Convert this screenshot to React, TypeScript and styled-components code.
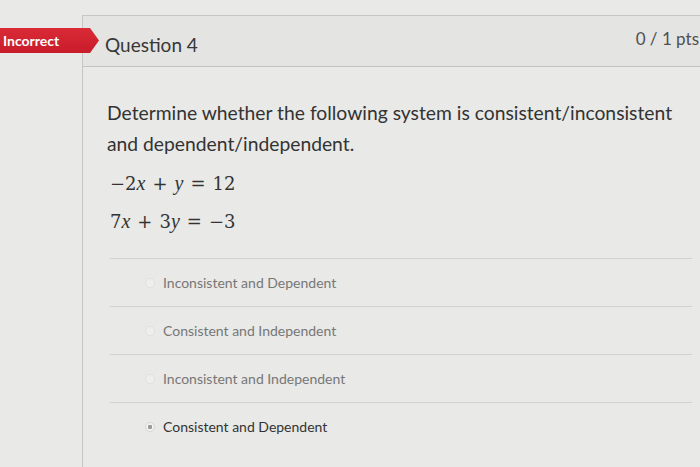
import styled, { createGlobalStyle } from 'styled-components';

const GlobalStyle = createGlobalStyle`
  html, body {
    margin: 0;
    padding: 0;
    background: #e9e9e7;
    font-family: Lato, "Noto Sans", sans-serif;
    overflow: hidden;
  }
`;

interface Answer {
  text: string;
  selected?: boolean;
}

const answers: Answer[] = [
  { text: 'Inconsistent and Dependent' },
  { text: 'Consistent and Independent' },
  { text: 'Inconsistent and Independent' },
  { text: 'Consistent and Dependent', selected: true },
];

const App = () => {
  return (
    <>
      <GlobalStyle />
      <Page>
        <Badge>Incorrect</Badge>
        <Card>
          <Header>
            <Title>Question 4</Title>
            <Points>0 / 1 pts</Points>
          </Header>
          <Body>
            <Prompt>
              Determine whether the following system is consistent/inconsistent and
              dependent/independent.
            </Prompt>
            <Equation>
              −2<Var>x</Var>
              <Op>+</Op>
              <Var>y</Var>
              <Op>=</Op>12
            </Equation>
            <Equation>
              7<Var>x</Var>
              <Op>+</Op>3<Var>y</Var>
              <Op>=</Op>−3
            </Equation>
            <Answers>
              {answers.map((a) => (
                <AnswerRow key={a.text}>
                  <Radio selected={a.selected} />
                  <AnswerText selected={a.selected}>{a.text}</AnswerText>
                </AnswerRow>
              ))}
            </Answers>
          </Body>
        </Card>
      </Page>
    </>
  );
};

export default App;

const Page = styled.div`
  position: relative;
  width: 700px;
  height: 467px;
  padding: 15px 0 0 82px;
  box-sizing: border-box;
  overflow: hidden;
`;

const Badge = styled.div`
  position: absolute;
  left: 0;
  top: 28px;
  height: 25px;
  width: 99px;
  box-sizing: border-box;
  padding-left: 3px;
  background: linear-gradient(#d92a36, #c81c2b);
  clip-path: polygon(0 0, 90px 0, 99px 50%, 90px 100%, 0 100%);
  color: #fff;
  font-size: 14px;
  font-weight: 700;
  line-height: 25px;
`;

const Card = styled.div`
  flex: none;
  width: 640px;
  height: 460px;
  border-top: 1px solid #c6c6c4;
  border-left: 1px solid #c6c6c4;
`;

const Header = styled.div`
  display: flex;
  justify-content: space-between;
  align-items: flex-start;
  height: 51px;
  box-sizing: border-box;
  padding: 0 24px 0 22px;
  background: #e4e4e2;
  border-bottom: 1px solid #c2c2c0;
`;

const Title = styled.h2`
  margin: 17px 0 0;
  font-size: 19px;
  font-weight: 400;
  color: #373737;
`;

const Points = styled.div`
  margin-top: 12px;
  font-size: 17px;
  font-weight: 400;
  color: #505050;
  white-space: nowrap;
`;

const Body = styled.div`
  padding: 30px 0 0 24px;
`;

const Prompt = styled.p`
  margin: 0 0 5px;
  width: 580px;
  font-size: 19.3px;
  line-height: 31px;
  color: #333;
`;

const Equation = styled.div`
  font-family: "DejaVu Serif", "Liberation Serif", serif;
  font-size: 18px;
  color: #333;
  height: 38px;
  line-height: 38px;
  padding-left: 3px;
`;

const Var = styled.i`
  font-family: "Liberation Serif", serif;
  font-size: 20px;
`;

const Op = styled.span`
  margin: 0 7px;
`;

const Answers = styled.div`
  margin-top: 18px;
  width: 582px;
  margin-left: 3px;
`;

const AnswerRow = styled.div`
  display: flex;
  align-items: center;
  gap: 8px;
  height: 47px;
  padding-left: 35px;
  border-top: 1px solid #d2d2d0;
`;

const Radio = styled.span<{ selected?: boolean }>`
  width: 10px;
  height: 10px;
  border-radius: 50%;
  box-sizing: border-box;
  border: 1px solid ${({ selected }) => (selected ? '#d6d6d4' : '#e0e0de')};
  background: ${({ selected }) =>
    selected ? 'radial-gradient(circle, #9a9a9a 0 2px, #f2f2f0 2.5px)' : '#eeeeec'};
`;

const AnswerText = styled.span<{ selected?: boolean }>`
  font-size: 14px;
  color: ${({ selected }) => (selected ? '#333' : '#777')};
`;
